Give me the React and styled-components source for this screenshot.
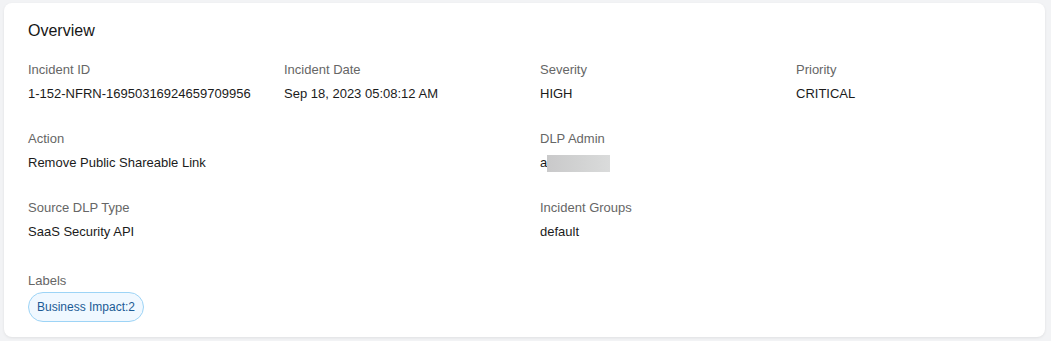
import React from "react";
import styled, { createGlobalStyle } from "styled-components";

const Global = createGlobalStyle`
  html, body { margin: 0; padding: 0; background: #f2f3f5; }
  body { font-family: "Liberation Sans", Arial, sans-serif; }
`;

const Page = styled.div`
  padding: 3px 6px 4px 4px;
  background: #f2f3f5;
`;

const Card = styled.section`
  background: #ffffff;
  border-radius: 8px;
  box-shadow: 0 1px 3px rgba(0, 0, 0, 0.08);
  padding: 16px 24px 15px 24px;
  height: 334px;
  box-sizing: border-box;
`;

const Title = styled.h2`
  margin: 0 0 17px 0;
  font-size: 16px;
  line-height: 24px;
  font-weight: 400;
  color: #161616;
`;

const Grid = styled.div`
  display: grid;
  grid-template-columns: repeat(4, 256px);
  row-gap: 25px;
`;

const Field = styled.div`
  grid-column: ${(p) => p.$col || "auto"};
  display: flex;
  flex-direction: column;
`;

const Label = styled.div`
  font-size: 13px;
  line-height: 20px;
  color: #666666;
`;

const Value = styled.div`
  margin-top: 4px;
  font-size: 13px;
  line-height: 20px;
  color: #1b1b1b;
  display: flex;
  align-items: center;
`;

const Redacted = styled.span`
  display: inline-block;
  width: 63px;
  height: 17px;
  background: linear-gradient(90deg, #c9c9ca 0%, #d3d4d4 60%, #dadbdb 100%);
`;

const LabelsSection = styled.div`
  margin-top: 29px;
  display: flex;
  flex-direction: column;
  align-items: flex-start;
`;

const Pill = styled.span`
  margin-top: 1px;
  display: inline-flex;
  align-items: center;
  height: 30px;
  box-sizing: border-box;
  padding: 0 8px;
  border: 1px solid #9dd4f6;
  border-radius: 15px;
  background: #f0f8ff;
  color: #1c5b95;
  font-size: 12px;
`;

const fields = [
  { label: "Incident ID", value: "1-152-NFRN-16950316924659709956" },
  { label: "Incident Date", value: "Sep 18, 2023 05:08:12 AM" },
  { label: "Severity", value: "HIGH" },
  { label: "Priority", value: "CRITICAL" },
  { label: "Action", value: "Remove Public Shareable Link", col: "1" },
  { label: "DLP Admin", value: "redacted", col: "3" },
  { label: "Source DLP Type", value: "SaaS Security API", col: "1" },
  { label: "Incident Groups", value: "default", col: "3" },
];

export default function App() {
  return (
    <>
      <Global />
      <Page>
        <Card>
          <Title>Overview</Title>
          <Grid>
            {fields.map((f) => (
              <Field key={f.label} $col={f.col}>
                <Label>{f.label}</Label>
                <Value>
                  {f.value === "redacted" ? (
                    <>
                      a<Redacted />
                    </>
                  ) : (
                    f.value
                  )}
                </Value>
              </Field>
            ))}
          </Grid>
          <LabelsSection>
            <Label>Labels</Label>
            <Pill>Business Impact:2</Pill>
          </LabelsSection>
        </Card>
      </Page>
    </>
  );
}
